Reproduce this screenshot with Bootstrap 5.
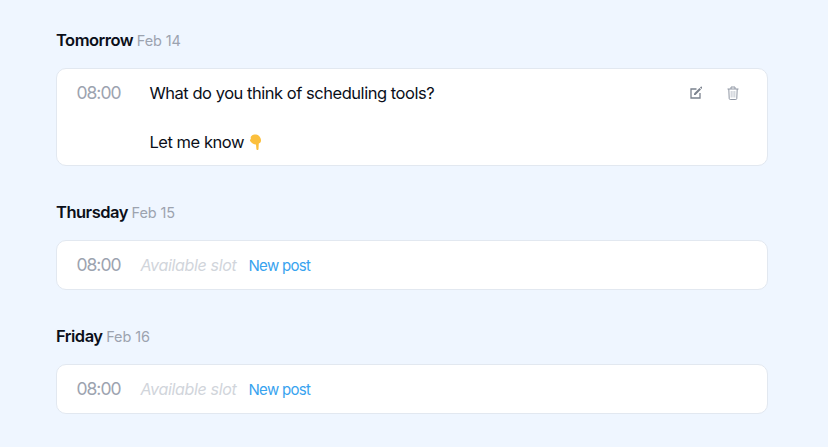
<!DOCTYPE html>
<html lang="en">
<head>
  <meta charset="UTF-8" />
  <title>Schedule</title>
  <link href="https://cdn.jsdelivr.net/npm/bootstrap@5.3.0/dist/css/bootstrap.min.css" rel="stylesheet" />
  <style>
    body { background: #eff6ff; font-family: Inter, "Liberation Sans", sans-serif; color: #111827; overflow: hidden; }
    .page-wrap { padding: 26px 60px 0 56px; }
    .day-block { margin-bottom: 32px; }
    .day-title { height: 28px; margin-bottom: 14px; font-size: 16.5px; line-height: 28px; font-weight: 600; letter-spacing: -.5px; color: #0b0f19; }
    .day-date { font-size: 14.5px; font-weight: 400; letter-spacing: -.1px; color: #9ca3af; }
    .slot-card { border: 1px solid #e2e8f0; border-radius: 10px; background: #fff; padding: 12px 20px 12px 19.5px; min-height: 50px; }
    .slot-card.tall { padding-bottom: 10.5px; }
    .slot-time { width: 64px; flex: none; font-size: 17.5px; line-height: 24px; letter-spacing: -1px; color: #9ca3af; }
    .tall .slot-time { width: 73px; }
    .slot-text { font-size: 16.5px; line-height: 24.5px; letter-spacing: -.47px; color: #0b0f19; }
    .slot-empty { width: 96px; flex: none; font-size: 16px; line-height: 24px; font-style: italic; letter-spacing: -.33px; color: #d1d5db; }
    .new-post { font-size: 15px; line-height: 22px; padding-top: 2px; letter-spacing: -.7px; color: #38a3ef; text-decoration: none; margin-left: 12px; }
    .slot-tools { gap: 25px; padding-right: 8px; height: 24px; }
    .tool-icon { display: block; width: 12px; height: 14px; }
    .emoji-hand { display: inline-block; vertical-align: -3px; width: 14px; height: 17px; margin-left: 1px; }
  </style>
</head>
<body>

<div class="page-wrap">

  <section class="day-block">
    <h2 class="day-title">Tomorrow <span class="day-date">Feb 14</span></h2>
    <div class="slot-card tall d-flex align-items-start">
      <div class="slot-time">08:00</div>
      <div class="slot-text flex-grow-1">
        What do you think of scheduling tools?
        <br><br>
        Let me know
        <svg class="emoji-hand" viewBox="0 0 14 17" aria-hidden="true">
          <path fill="#fbbf3c" d="M3 1.500C4.500.2 8 .2 9.500 1.500c1.500 1 2.500 3 2.500 5 0 1.600-.8 2.600-2.200 3l-.3 5.400c0 1.500-2 1.500-2.100 0L7 10.500C4.500 10.500 2.500 9 1.500 7.500.5 6 .8 5 2 5.200 1.300 3.500 1.800 2.300 3 1.500Z"/>
        </svg>
      </div>
      <div class="slot-tools d-flex align-items-center">
        <svg class="tool-icon" viewBox="0 0 12 14" aria-hidden="true">
          <path fill="none" stroke="#7b828e" stroke-width="1.300" d="M6.500 3H1v9h9V7"/>
          <path fill="#7b828e" d="M4 7.500 9.500 2l1.500 1.500L5.500 9H4Z"/>
          <path fill="#7b828e" d="M10 1.500 10.800.8a.7.7 0 0 1 1 0l.2.3a.7.7 0 0 1 0 1l-.5.8Z"/>
        </svg>
        <svg class="tool-icon" viewBox="0 0 12 14" aria-hidden="true">
          <path fill="none" stroke="#8f96a3" stroke-width="1" d="M.5 3h11M4 3V1h4v2M1.800 3l.4 9.500c0 .6.4 1 1 1h5.600c.6 0 1-.4 1-1l.4-9.500"/>
          <path fill="none" stroke="#c4c9d1" stroke-width="1" d="M4.200 5v6.500M6 5v6.500M7.800 5v6.500"/>
        </svg>
      </div>
    </div>
  </section>

  <section class="day-block">
    <h2 class="day-title">Thursday <span class="day-date">Feb 15</span></h2>
    <div class="slot-card d-flex align-items-center">
      <div class="slot-time">08:00</div>
      <div class="slot-empty text-nowrap">Available slot</div>
      <a class="new-post" href="#">New post</a>
    </div>
  </section>

  <section class="day-block">
    <h2 class="day-title">Friday <span class="day-date">Feb 16</span></h2>
    <div class="slot-card d-flex align-items-center">
      <div class="slot-time">08:00</div>
      <div class="slot-empty text-nowrap">Available slot</div>
      <a class="new-post" href="#">New post</a>
    </div>
  </section>

</div>

<script src="https://cdn.jsdelivr.net/npm/bootstrap@5.3.0/dist/js/bootstrap.bundle.min.js"></script>
</body>
</html>
